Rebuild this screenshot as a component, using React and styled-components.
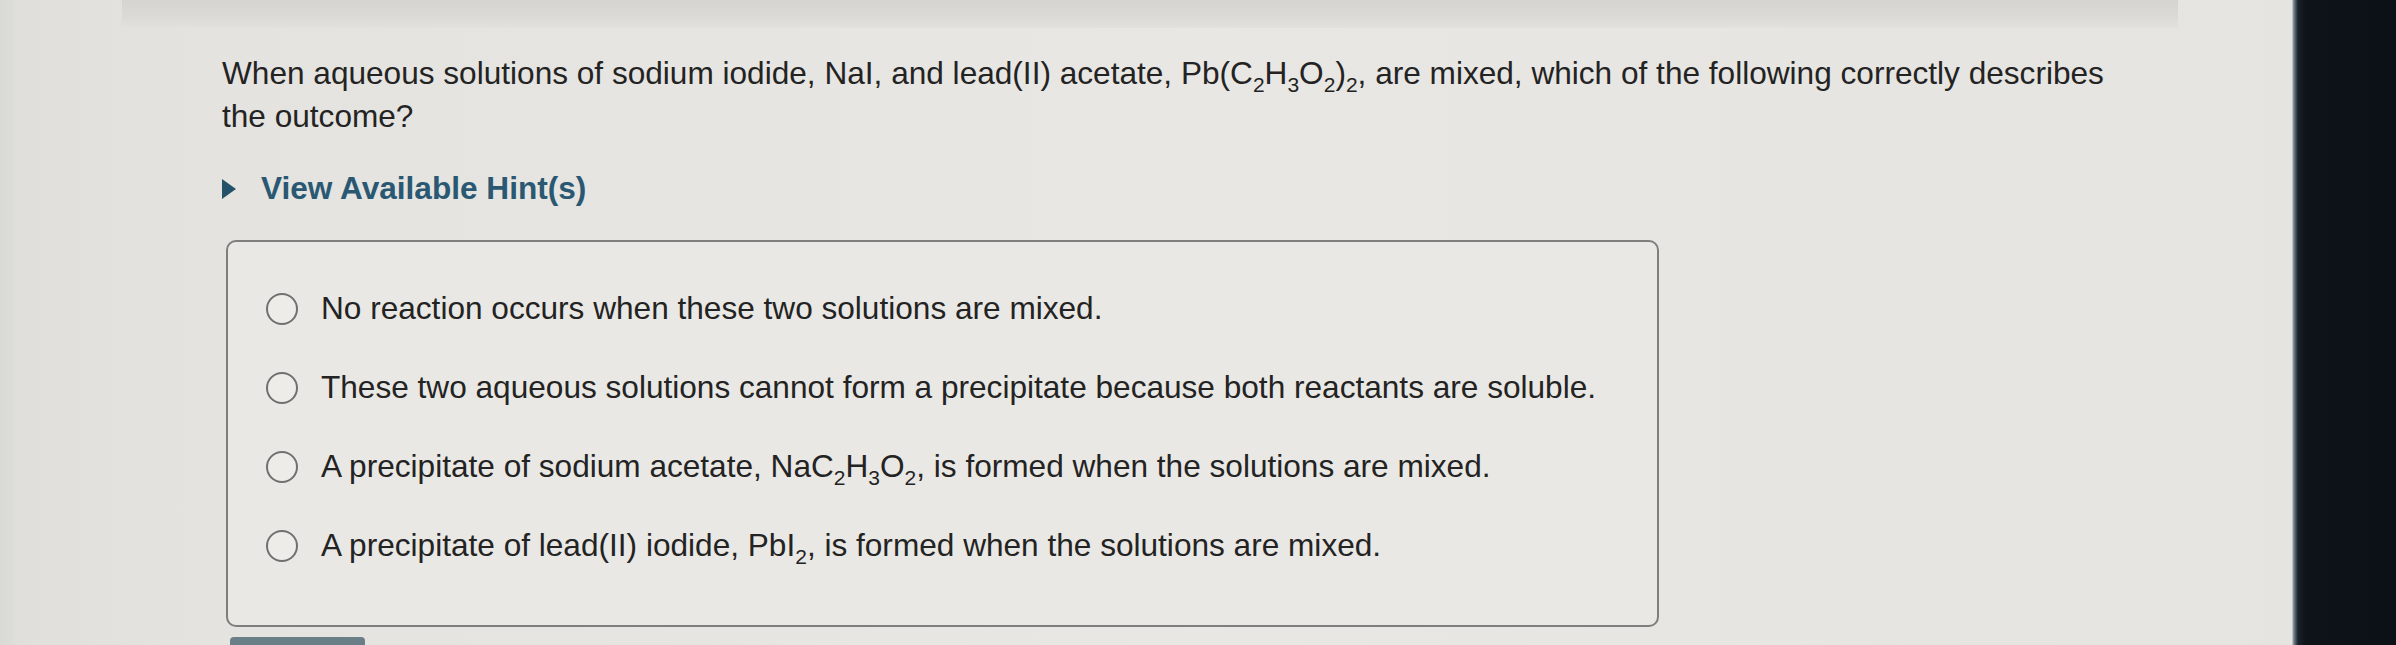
import React from "react";
import styled, { createGlobalStyle } from "styled-components";

const Global = createGlobalStyle`
  html, body { margin: 0; padding: 0; overflow: hidden; }
  body {
    width: 2396px;
    height: 645px;
    background: #e4e3df;
    font-family: "Liberation Sans", Arial, Helvetica, sans-serif;
  }
`;

const Page = styled.div`
  display: flex;
  width: 2396px;
  height: 645px;
  overflow: hidden;
  background: linear-gradient(90deg, #d9d9d5 0px, #dcdcd8 12px, #e0dfdb 16px, #e4e3df 200px, #e8e7e3 1200px, #e5e4e0 2290px);
`;

const Main = styled.main`
  flex: 1;
  display: flex;
  flex-direction: column;
  min-width: 0;
  overflow: hidden;
`;

const TopBand = styled.div`
  flex: none;
  height: 28px;
  margin: 0 114px 0 122px;
  background: linear-gradient(180deg, #d5d4d0 0%, #dbdad6 60%, #e2e1dd 100%);
`;

const Content = styled.div`
  padding-left: 222px;
  display: flex;
  flex-direction: column;
  align-items: flex-start;
`;

const Question = styled.p`
  margin: 23.5px 0 0;
  width: 1900px;
  font-size: 31.6px;
  line-height: 43px;
  color: #232323;
`;

const Sub = styled.sub`
  font-size: 21px;
  line-height: 0;
  vertical-align: -8px;
`;

const HintRow = styled.div`
  margin-top: 29.5px;
  display: flex;
  align-items: center;
  gap: 25px;
  height: 43px;
  color: #2a5872;
  font-size: 31.6px;
  font-weight: bold;
  cursor: pointer;
`;

const Triangle = styled.span`
  width: 0;
  height: 0;
  border-top: 10px solid transparent;
  border-bottom: 10px solid transparent;
  border-left: 14px solid #25516a;
`;

const Box = styled.div`
  margin: 29.5px 0 0 4px;
  width: 1433px;
  box-sizing: border-box;
  border: 2px solid #7e7e7c;
  border-radius: 10px;
  background: #e9e8e4;
  padding: 27.5px 0 39.5px 38px;
  display: flex;
  flex-direction: column;
`;

const Option = styled.label`
  display: flex;
  align-items: center;
  gap: 23px;
  height: 79px;
  font-size: 31.6px;
  color: #232323;
`;

const Radio = styled.span`
  flex: none;
  width: 32px;
  height: 32px;
  box-sizing: border-box;
  border-radius: 50%;
  border: 2.5px solid #707070;
  background: #edece8;
`;

const BottomButton = styled.div`
  margin: 10px 0 0 8px;
  width: 135px;
  height: 9px;
  border-radius: 4px 4px 0 0;
  background: #6a7e88;
`;

const Edge = styled.div`
  flex: none;
  width: 104px;
  background: linear-gradient(90deg, #cfd6dc 0px, #6e7c86 2px, #1a222a 6px, #0e1219 14px, #0c1017 100%);
`;

const options = [
  <>No reaction occurs when these two solutions are mixed.</>,
  <>These two aqueous solutions cannot form a precipitate because both reactants are soluble.</>,
  <>
    A precipitate of sodium acetate, NaC<Sub>2</Sub>H<Sub>3</Sub>O<Sub>2</Sub>, is formed when the solutions are mixed.
  </>,
  <>
    A precipitate of lead(II) iodide, PbI<Sub>2</Sub>, is formed when the solutions are mixed.
  </>,
];

export default function App() {
  return (
    <>
      <Global />
      <Page>
        <Main>
          <TopBand />
          <Content>
            <Question>
              When aqueous solutions of sodium iodide, NaI, and lead(II) acetate, Pb(C<Sub>2</Sub>H<Sub>3</Sub>O
              <Sub>2</Sub>)<Sub>2</Sub>, are mixed, which of the following correctly describes the outcome?
            </Question>
            <HintRow>
              <Triangle />
              <span>View Available Hint(s)</span>
            </HintRow>
            <Box>
              {options.map((o, i) => (
                <Option key={i}>
                  <Radio />
                  <span>{o}</span>
                </Option>
              ))}
            </Box>
            <BottomButton />
          </Content>
        </Main>
        <Edge />
      </Page>
    </>
  );
}
